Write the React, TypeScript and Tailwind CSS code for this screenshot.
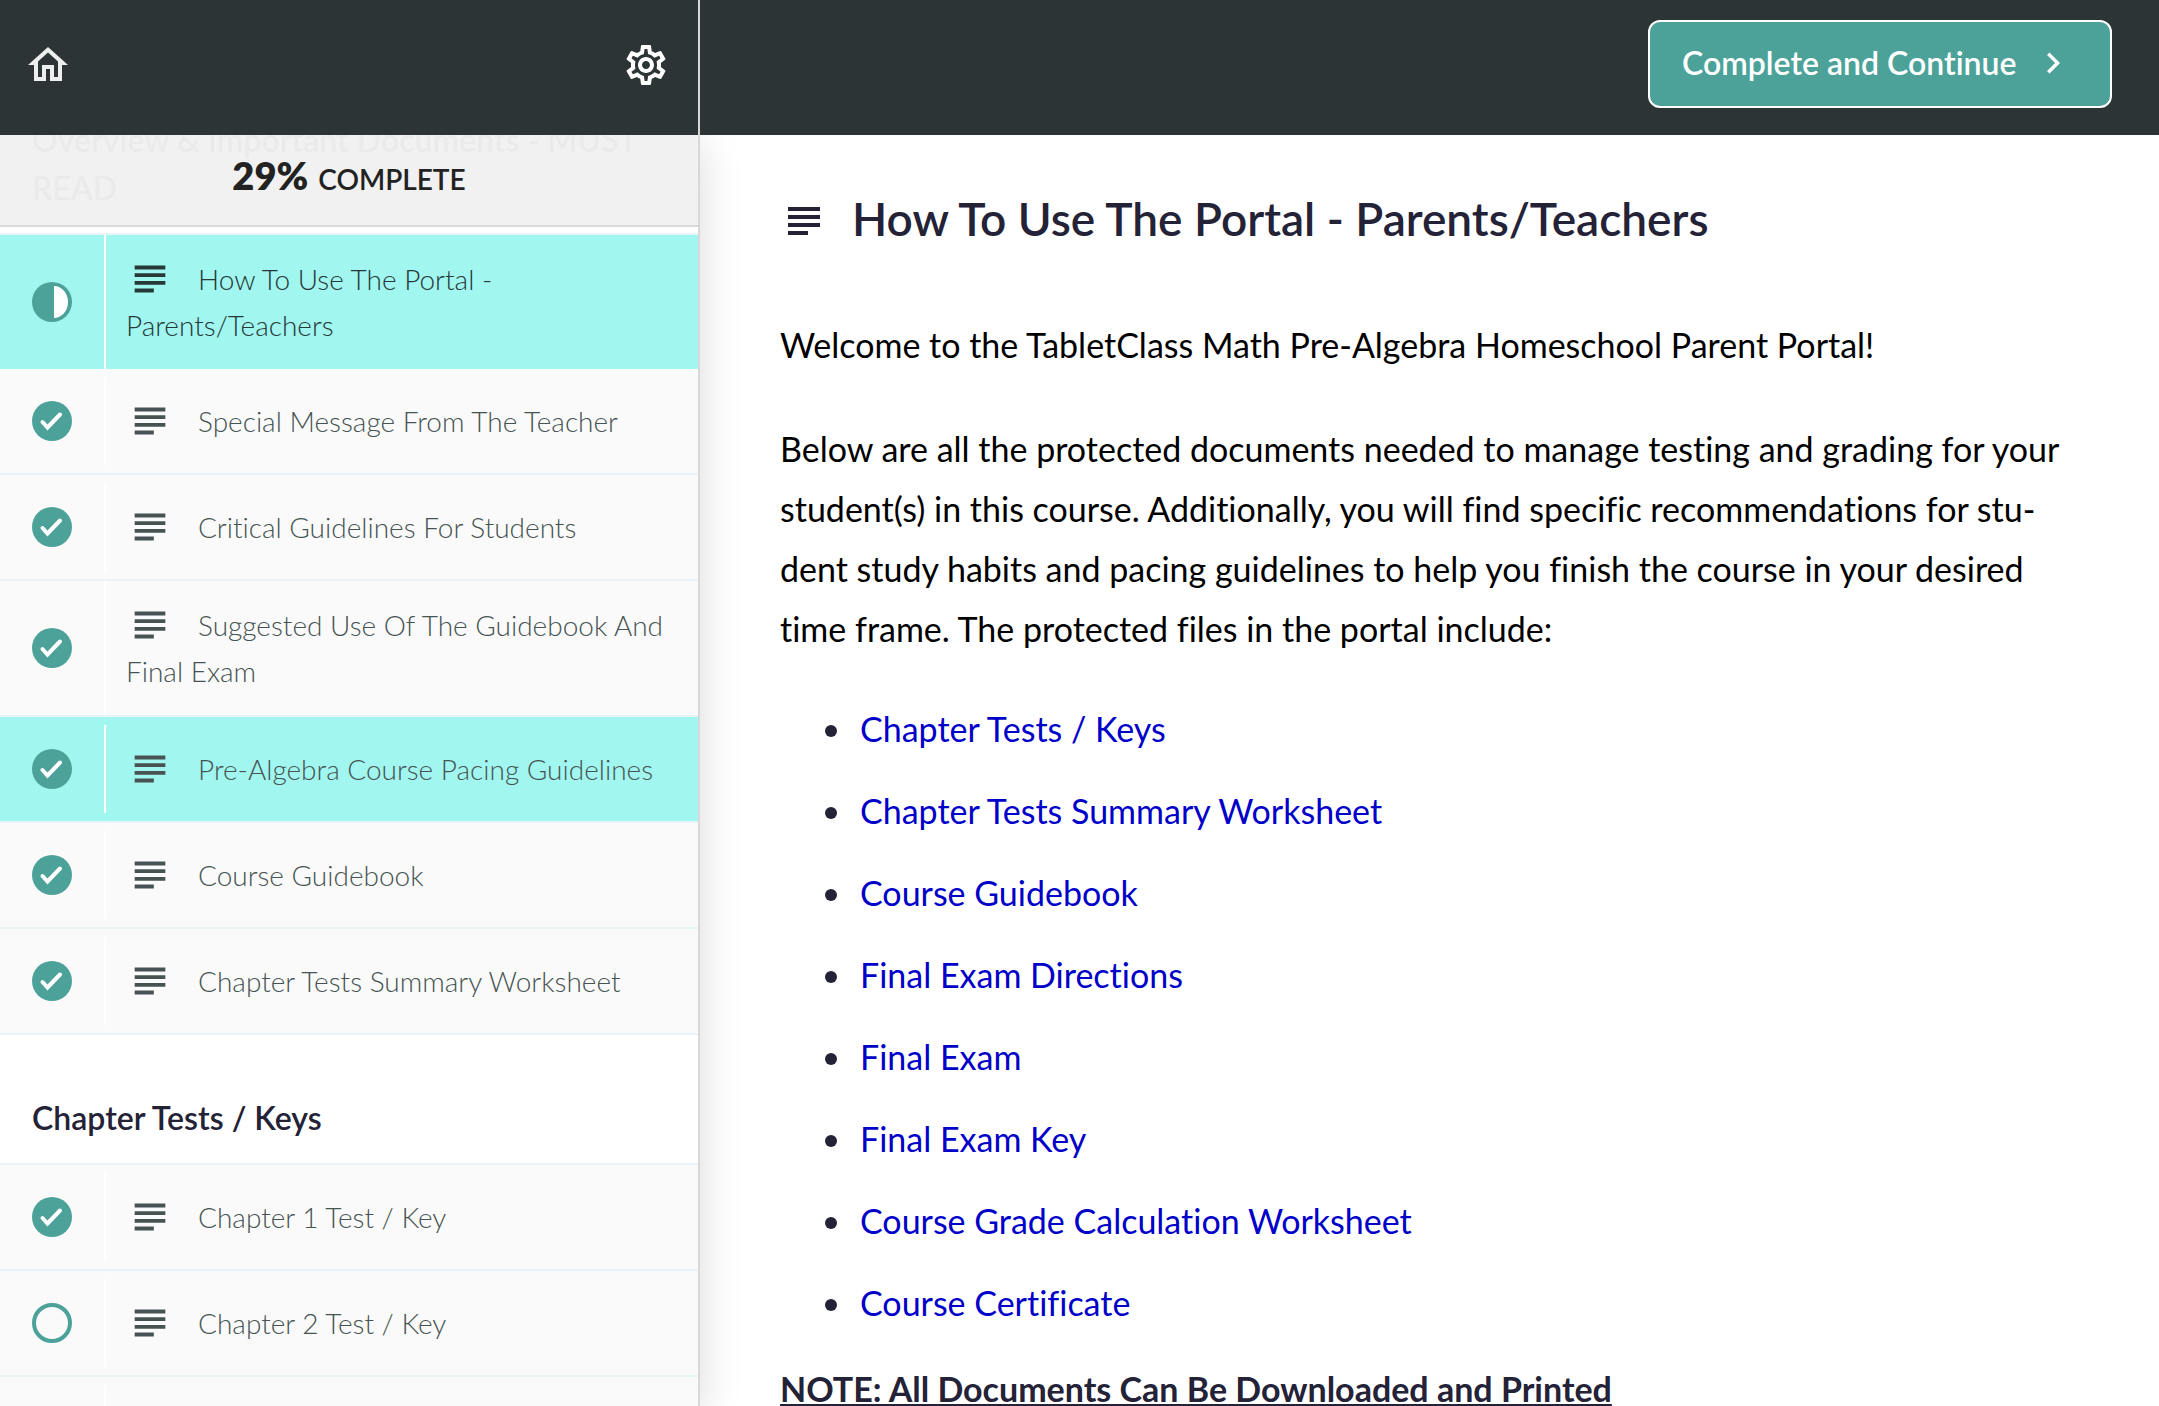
import React from 'react';
import { MdChevronRight, MdOutlineHome, MdOutlineSettings, MdSubject } from 'react-icons/md';

type Status = 'done' | 'started' | 'todo';

interface Lecture {
  title: string;
  status: Status;
  highlighted?: boolean;
  current?: boolean;
}

const overviewLectures: Lecture[] = [
  { title: 'How To Use The Portal - Parents/Teachers', status: 'started', highlighted: true, current: true },
  { title: 'Special Message From The Teacher', status: 'done' },
  { title: 'Critical Guidelines For Students', status: 'done' },
  { title: 'Suggested Use Of The Guidebook And Final Exam', status: 'done' },
  { title: 'Pre-Algebra Course Pacing Guidelines', status: 'done', highlighted: true },
  { title: 'Course Guidebook', status: 'done' },
  { title: 'Chapter Tests Summary Worksheet', status: 'done' },
];

const chapterLectures: Lecture[] = [
  { title: 'Chapter 1 Test / Key', status: 'done' },
  { title: 'Chapter 2 Test / Key', status: 'todo' },
  { title: 'Chapter 3 Test / Key', status: 'todo' },
];

const documents = [
  'Chapter Tests / Keys',
  'Chapter Tests Summary Worksheet',
  'Course Guidebook',
  'Final Exam Directions',
  'Final Exam',
  'Final Exam Key',
  'Course Grade Calculation Worksheet',
  'Course Certificate',
];

const StatusIcon: React.FC<{ status: Status }> = ({ status }) => (
  <svg className="w-10 h-10 shrink-0" viewBox="0 0 40 40" fill="none">
    {status === 'todo' ? (
      <circle cx="20" cy="20" r="18" stroke="#4ca299" strokeWidth="4" />
    ) : (
      <circle cx="20" cy="20" r="20" fill="#4ca299" />
    )}
    {status === 'started' && <path d="M22 4a14 16 0 0 1 0 32z" fill="#fff" />}
    {status === 'done' && (
      <path d="M10.5 21l5 5.5L28 13.5" stroke="#fff" strokeWidth="4" strokeLinecap="round" />
    )}
  </svg>
);

const LectureRow: React.FC<{ lecture: Lecture }> = ({ lecture }) => {
  const { title, status, highlighted, current } = lecture;

  return (
    <li className={current ? '' : 'border-b-2 border-[#e8f4f5]'}>
      <a
        href="#"
        className={`flex items-center min-h-[104px] ${highlighted ? 'bg-[#a1f6ef]' : 'bg-[#fafafa]'} ${
          current ? 'text-[#263838]' : 'text-[#465352]'
        }`}
      >
        <span className="w-[104px] pl-8 shrink-0">
          <StatusIcon status={status} />
        </span>
        <span className="flex-1 border-l-2 border-white pl-5 pr-4 py-[21px] text-[28px] leading-[46px] font-light">
          <MdSubject className="inline-block w-12 h-[46px] mr-6 align-top" />
          {title}
        </span>
      </a>
    </li>
  );
};

const LectureList: React.FC<{ lectures: Lecture[] }> = ({ lectures }) => (
  <ul className="border-t-2 border-[#e8f4f5]">
    {lectures.map((lecture) => (
      <LectureRow key={lecture.title} lecture={lecture} />
    ))}
  </ul>
);

const Sidebar = () => (
  <aside className="relative z-10 w-[700px] shrink-0 overflow-hidden bg-white border-r-2 border-[#d8d8db]">
    {/* Progress sits over the scrolled lecture list */}
    <div className="absolute inset-x-0 top-0 h-[92px] flex items-center justify-center bg-[#f1f1f1]/97 border-b-2 border-[#d8d8db] pb-2.5 text-[#222222]">
      <p className="flex items-baseline gap-2.5 text-[28px] leading-none font-semibold">
        <span className="text-[38px] leading-none font-extrabold">29%</span>
        COMPLETE
      </p>
    </div>

    <h2 className="-mt-[19px] px-8 pb-[21px] text-[32px] leading-[48px] font-semibold text-[#242237]">
      Overview &amp; Important Documents - MUST READ
    </h2>
    <LectureList lectures={overviewLectures} />

    <h2 className="px-8 pt-[59px] pb-[21px] text-[32px] leading-[48px] font-semibold text-[#242237]">
      Chapter Tests / Keys
    </h2>
    <LectureList lectures={chapterLectures} />
  </aside>
);

const Header = () => (
  <header className="relative z-20 flex h-[135px] shrink-0 bg-[#2d3436] text-white">
    <nav className="flex w-[700px] shrink-0 justify-between border-r-2 border-[#d8d8db] px-6 pt-[41px]">
      <a href="#" aria-label="Home" className="h-12 text-[#eeeeee]">
        <MdOutlineHome className="w-12 h-12" />
      </a>
      <button type="button" aria-label="Settings" className="h-12 mr-1">
        <MdOutlineSettings className="w-12 h-12" />
      </button>
    </nav>
    <div className="flex flex-1 items-start justify-end pt-5 pr-[47px]">
      <button
        type="button"
        className="flex h-[88px] w-[464px] items-center gap-4 rounded-xl border-2 border-white bg-[#4ca299] pl-8 pb-0.5 text-[32px] font-semibold"
      >
        Complete and Continue
        <MdChevronRight className="w-[42px] h-[42px]" />
      </button>
    </div>
  </header>
);

const App = () => (
  <div
    className="flex h-screen flex-col overflow-hidden bg-white [font-variant-ligatures:none]"
    style={{ fontFamily: 'Lato, "Liberation Sans", sans-serif' }}
  >
    <Header />
    <div className="flex min-h-0 flex-1">
      <div className="flex shadow-[0_8px_40px_rgba(0,0,0,0.15)]">
        <Sidebar />
      </div>

      <main className="flex-1 overflow-hidden px-20 pt-14 text-[34px] leading-[60px] text-black">
        <h1 className="flex items-center gap-6 text-[46px] leading-[56px] font-semibold text-[#242237]">
          <MdSubject className="w-12 h-12" />
          <span className="pb-1">How To Use The Portal - Parents/Teachers</span>
        </h1>

        <p className="mt-16">Welcome to the TabletClass Math Pre-Algebra Homeschool Parent Portal!</p>
        <p className="mt-11">
          Below are all the protected documents needed to manage testing and grading for your student(s) in this
          course. Additionally, you will find specific recommendations for stu&shy;dent study habits and pacing
          guidelines to help you finish the course in your desired time frame. The protected files in the portal
          include:
        </p>

        <ul className="mt-10 flex flex-col gap-[22px] pl-[45px]">
          {documents.map((name) => (
            <li key={name} className="flex items-center gap-[23px]">
              <span className="mt-1 h-3 w-3 rounded-full bg-[#242237]" />
              <a href="#" className="text-[#0000c8]">
                {name}
              </a>
            </li>
          ))}
        </ul>

        <p className="mt-[26px] font-bold text-[#242237] underline">
          NOTE: All Documents Can Be Downloaded and Printed
        </p>
      </main>
    </div>
  </div>
);

export default App;
